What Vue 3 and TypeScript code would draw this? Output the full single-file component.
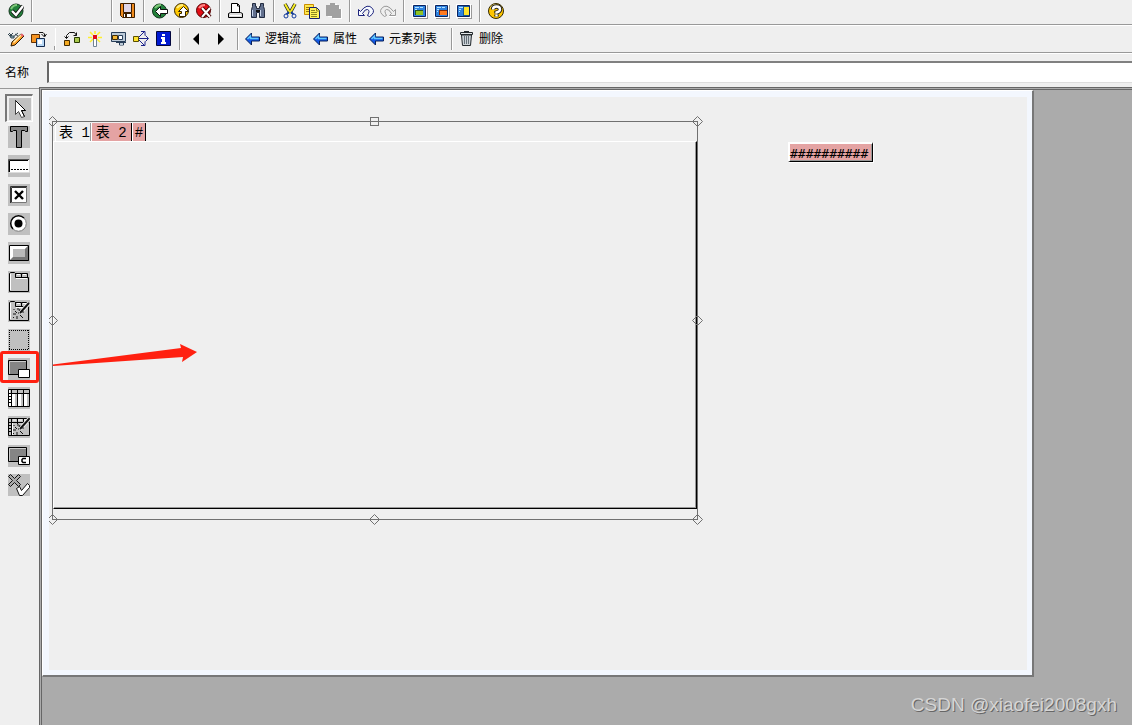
<script setup lang="ts">
import { ref } from 'vue'

interface Tool { id: string; label: string }

const fieldName = ref('')
const activeTool = ref('pointer')
const activeTab = ref('表 1')

const mainGroups: Tool[][] = [
  [{ id: 'save', label: '保存' }],
  [{ id: 'back', label: '返回' }, { id: 'exit', label: '退出' }, { id: 'cancel', label: '取消' }],
  [{ id: 'print', label: '打印' }, { id: 'find', label: '查找' }],
  [{ id: 'cut', label: '剪切' }, { id: 'copy', label: '复制' }, { id: 'paste', label: '粘贴' }],
  [{ id: 'undo', label: '撤销' }, { id: 'redo', label: '重做' }],
  [{ id: 'win-green', label: '窗口一' }, { id: 'win-orange', label: '窗口二' }, { id: 'win-yellow', label: '窗口三' }],
  [{ id: 'help', label: '帮助' }],
]
const editTools: Tool[] = [{ id: 'edit', label: '显示/修改' }, { id: 'other', label: '其它对象' }]
const objectTools: Tool[] = [
  { id: 'activate', label: '激活' },
  { id: 'wand', label: '检查' },
  { id: 'where', label: '使用位置' },
  { id: 'tree', label: '对象清单' },
  { id: 'info', label: '信息' },
]
const links = ['逻辑流', '属性', '元素列表']
const palette: Tool[] = [
  { id: 'pointer', label: '选择' },
  { id: 'text', label: '文本字段' },
  { id: 'entry', label: '输入字段' },
  { id: 'check', label: '复选框' },
  { id: 'radio', label: '单选按钮' },
  { id: 'push', label: '按钮' },
  { id: 'tabstrip', label: '标签条' },
  { id: 'tabwizard', label: '标签条向导' },
  { id: 'frame', label: '框' },
  { id: 'subscreen', label: '子屏幕区域' },
  { id: 'table', label: '表控制' },
  { id: 'tablewizard', label: '表控制向导' },
  { id: 'custom', label: '定制控制' },
  { id: 'status', label: '状态图标' },
]
const tabs = ['表 1', '表 2', '#']
const handles = ['nw', 'ne', 'w', 'e', 'sw', 's', 'se']
</script>

<template>
  <svg class="defs" aria-hidden="true">
    <defs>
      <symbol id="ok" viewBox="0 0 16 16">
        <circle cx="8" cy="8" r="7" fill="#23823b" stroke="#12351c" />
        <path d="M3 6Q5 2 9 2" stroke="#7dc878" stroke-width="2" fill="none" />
        <path d="M4 8l4 4 7-9" stroke="#111" stroke-width="4" fill="none" />
        <path d="M4 8l4 4 7-9" stroke="#fff" stroke-width="2.4" fill="none" />
      </symbol>
      <symbol id="save" viewBox="0 0 16 16">
        <path d="M.5 .5h14v14H2.500l-2-2z" fill="#f08b1d" stroke="#3a1c00" />
        <path d="M4 1h7v8H4z" fill="#ded5e8" /><path d="M3.500 1v8.500h8V1" fill="none" stroke="#3a1c00" />
        <path d="M4 11h7v3H4z" fill="#fff" /><path d="M3.500 14v-3.500h8V14" fill="none" stroke="#3a1c00" /><path d="M5 11h2v3H5z" fill="#3a1c00" />
      </symbol>
      <symbol id="back" viewBox="0 0 16 16">
        <circle cx="7.500" cy="8" r="7" fill="#23823b" stroke="#12351c" />
        <path d="M3 5Q5 2 9 2" stroke="#7dc878" stroke-width="2" fill="none" />
        <path d="M3.500 8.500l5-5v3h7v4h-7v3z" fill="#fff" stroke="#111" />
      </symbol>
      <symbol id="exit" viewBox="0 0 16 16">
        <circle cx="7.500" cy="7.500" r="7" fill="#ffc800" stroke="#332200" />
        <path d="M3 5Q5 2 9 2" stroke="#ffef80" stroke-width="2" fill="none" />
        <path d="M9.500 3.500l5 5h-3v5h-6v-3h2v-2h-3z" fill="#fff" stroke="#332200" />
      </symbol>
      <symbol id="cancel" viewBox="0 0 16 16">
        <circle cx="7.500" cy="7.500" r="7" fill="#e30d16" stroke="#500" />
        <path d="M3 5Q5 2 9 2" stroke="#ff8585" stroke-width="2" fill="none" />
        <path d="M6 5l8 9M14 5l-8 9" stroke="#400" stroke-width="4" />
        <path d="M6 5l8 9M14 5l-8 9" stroke="#fff" stroke-width="2" />
      </symbol>
      <symbol id="print" viewBox="0 0 16 16">
        <path d="M3.500 .5h6l2 2v7h-8z" fill="#fff" stroke="#000" />
        <path d="M.5 10.500l2-1h10l2 1v4H.5z" fill="#ddd" stroke="#000" />
        <path d="M2 12.500h11" stroke="#fff" /><path d="M9.500 1v2h2" fill="none" stroke="#000" />
      </symbol>
      <symbol id="find" viewBox="0 0 16 16">
        <path d="M2.500 .5h3v3h1v2h3v-2h1v-3h3v3l1 3v8h-5v-5h-3v5h-5v-8l1-3z" fill="#62708e" stroke="#222b40" />
        <path d="M2.500 7v6M10.500 7v6" stroke="#c8d6ed" /><path d="M6 8h4" stroke="#111" stroke-width="2" />
      </symbol>
      <symbol id="cut" viewBox="0 0 16 16">
        <path d="M3 1l5 9M13 1l-5 9" stroke="#222" stroke-width="3.500" />
        <path d="M3 1l5 9 5-9" stroke="#f7ed24" stroke-width="2" fill="none" />
        <path d="M7 9l-3 3M9 9l3 3" stroke="#123a99" stroke-width="2" />
        <circle cx="4" cy="13" r="2" fill="#eee" stroke="#123a99" /><circle cx="12" cy="13" r="2" fill="#eee" stroke="#123a99" />
      </symbol>
      <symbol id="copy" viewBox="0 0 16 16">
        <path d="M.5 1.500h9v10h-9z" fill="#ffe94d" stroke="#c98d00" />
        <path d="M2 4.500h3M2 6.500h3M2 8.500h3" stroke="#a07900" />
        <path d="M5.500 4.500h7l3 3v8h-10z" fill="#fff35b" stroke="#15206d" />
        <path d="M12.500 5v3h3M7 7.500h4M7 9.500h6M7 11.500h6M7 13.500h6" fill="none" stroke="#8b8620" />
      </symbol>
      <symbol id="paste" viewBox="0 0 16 16">
        <path d="M2 3h3V1h6v2h3v3h2v10H7v-2H2z" fill="#fff" />
        <path d="M0 2h4V0h5v2h4v4h2v9H6v-2H0z" fill="#a1a1a1" />
      </symbol>
      <symbol id="undo" viewBox="0 0 16 16">
        <path d="M.5 6.500v6h6l-2-2q3-5 5-4 3 1 0 6l2 1q6-4 3-8-5-6-12 3z" fill="#f6faff" stroke="#1d237c" />
      </symbol>
      <symbol id="redo" viewBox="0 0 16 16">
        <path d="M15.500 6.500v6h-6l2-2q-3-5-5-4-3 1 0 6l-2 1q-6-4-3-8 5-6 12 3z" fill="#eee" stroke="#999" />
        <path d="M9 13.500h7" fill="none" stroke="#fff" />
      </symbol>
      <symbol id="win" viewBox="0 0 16 16">
        <path d="M2 2h14v14H2z" fill="#999" /><path d="M0 1h15v14H0z" fill="#fff" />
        <path d="M1.500 2.500h12v11h-12z" fill="#2f83df" stroke="#0b235e" />
        <path d="M3 4.500h4M3 6.500h2M8 4.500h3M3 8.500h1" stroke="#b6e3ff" />
      </symbol>
      <symbol id="win-green" viewBox="0 0 16 16"><use href="#win" /><path d="M3 7h8v5H3z" fill="#2b5c1c" /><path d="M4 8h7v4H4z" fill="#90c423" /></symbol>
      <symbol id="win-orange" viewBox="0 0 16 16"><use href="#win" /><path d="M5 7h8v5H5z" fill="#8a2a00" /><path d="M6 8h7v4H6z" fill="#ff7b21" /></symbol>
      <symbol id="win-yellow" viewBox="0 0 16 16"><use href="#win" /><path d="M7 3h6v10H7z" fill="#145a99" /><path d="M8 4h5v8H8z" fill="#ffe52a" /></symbol>
      <symbol id="help" viewBox="0 0 16 16">
        <circle cx="8" cy="8" r="7.500" fill="#ffc600" stroke="#332900" />
        <path d="M3 5Q5 2 8 2" stroke="#fff099" stroke-width="2" fill="none" />
        <path d="M5 6.500q0-3 3.500-3t3.500 3q0 2-3.500 3v1m0 1v2" stroke="#222" stroke-width="4.400" fill="none" />
        <path d="M5 6.500q0-3 3.500-3t3.500 3q0 2-3.500 3v1m0 1v2" stroke="#fff" stroke-width="2.400" fill="none" />
      </symbol>

      <symbol id="edit" viewBox="0 0 16 16">
        <path d="M0 3l2 2 3-3M7 3l3 2M1 2l4 4 5-4" stroke="#344852" fill="none" />
        <path d="M2 5h4v2H3z" fill="#8fb4c4" stroke="#344852" />
        <path d="M13 3l3 2-9 9-4 1 1-4z" fill="#ffa129" stroke="#291800" />
        <path d="M5.500 11.500l8-8" stroke="#fff0b3" stroke-width="1.500" /><path d="M12.500 4l1.500-1.500L16 4.500 14.500 6z" fill="#ed6070" />
      </symbol>
      <symbol id="other" viewBox="0 0 16 16">
        <path d="M.5 3.500h8v8h-8z" fill="#f59423" stroke="#633000" />
        <path d="M5.500 7.500h8v8h-8z" fill="#b9d9f6" stroke="#142b50" /><path d="M7 9h4v4H7z" fill="#fff" />
        <path d="M8 1.500h4l1.500 1.500v2M10.500 3l3 3 2-3" fill="none" stroke="#111" />
      </symbol>
      <symbol id="activate" viewBox="0 0 16 16">
        <path d="M.5 9.500h5v5h-5z" fill="#f4aa22" stroke="#432a00" />
        <path d="M10.500 6.500h5v5h-5z" fill="#a8c84c" stroke="#283b00" />
        <path d="M2.500 7.500v-3l3-3h5l2 3M.5 5.500l2 2 2-2M9.500 4.500h3v-3" fill="none" stroke="#111" />
      </symbol>
      <symbol id="wand" viewBox="0 0 16 16">
        <path d="M3 1l3 3M13 1l-3 3M8 0v3M1 6.500h4M11 6.500h4M3 11l3-3M13 11l-3-3" stroke="#fff02c" stroke-width="1.500" />
        <path d="M6.500 7.500h3v8h-3z" fill="#fff" stroke="#708492" /><path d="M6 4h4v4H6z" fill="#e00d18" />
      </symbol>
      <symbol id="where" viewBox="0 0 16 16">
        <path d="M1.500 1.500h14v9h-14z" fill="#bdcbd8" stroke="#283e58" />
        <path d="M2.500 4.500h5v4h-5z" fill="#f5b938" stroke="#442d00" /><path d="M8.500 4.500h4v4h-4z" fill="#fff" stroke="#283e58" />
        <path d="M6 11.500h10M9.500 11v3h4v-3" stroke="#283e58" fill="none" /><path d="M10 12h3v2h-3z" fill="#bdcbd8" />
      </symbol>
      <symbol id="tree" viewBox="0 0 16 16">
        <path d="M5 7.500h10M6 6l5-5M6 9l5 5M8 .5h4v4M8 14.500h4v-4M12.500 4.500l3 3-3 3" fill="none" stroke="#1d248c" />
        <path d="M.5 5.500h5v5h-5z" fill="#ffe32d" stroke="#5b5000" />
      </symbol>
      <symbol id="info" viewBox="0 0 16 16">
        <path d="M.5 .5h14v14H.5z" fill="#0019d1" stroke="#02063d" />
        <path d="M6 3h3v2H6zM5 6h4v5h1v2H5v-2h1V8H5z" fill="#fff" />
      </symbol>
      <symbol id="prev" viewBox="0 0 16 16"><path d="M4 8l6-6v12z" /></symbol>
      <symbol id="next" viewBox="0 0 16 16"><path d="M11 8L5 2v12z" /></symbol>
      <symbol id="arrow" viewBox="0 0 16 16">
        <path d="M.5 8l6-6v4h8v4h-8v4z" fill="#1258e5" stroke="#07205b" />
        <path d="M2.500 8l3-3v2.500h8" fill="none" stroke="#61caff" stroke-width="1.500" />
      </symbol>
      <symbol id="trash" viewBox="0 0 16 16">
        <path d="M2.500 4h10l-1 10.500h-8z" fill="#cbd1d6" stroke="#22282c" />
        <path d="M1.500 1.500h12v2h-12z" fill="#e3e7e9" stroke="#22282c" /><path d="M5 .5h5" stroke="#22282c" />
        <path d="M5.500 5v8M7.500 5v8M9.500 5v8" stroke="#657078" />
      </symbol>

      <symbol id="pointer" viewBox="0 0 22 22">
        <path d="M6.500 2.500v14l3-3 3 6 3-1-3-6h4z" fill="#fff" stroke="#444" /><path d="M6.500 2.500l10 10h-4l3 6" fill="none" stroke="#000" />
      </symbol>
      <symbol id="text" viewBox="0 0 22 22"><path d="M2.500 .5h17v5h-2l-1-1h-3v17h-5v-17h-3l-1 1h-2z" fill="#858585" stroke="#000" /></symbol>
      <symbol id="entry" viewBox="0 0 22 22">
        <path d="M1 5h20v12H1z" fill="#fff" /><path d="M.5 17V4.500H21" fill="none" stroke="#555" /><path d="M1.500 17V5.500H20" fill="none" stroke="#000" />
        <path d="M3 14.500h17" stroke="#000" stroke-dasharray="2 1" /><path d="M1 17.500h20.500V5" fill="none" stroke="#ddd" />
      </symbol>
      <symbol id="check" viewBox="0 0 22 22">
        <path d="M3 3h16v16H3z" fill="#fff" /><path d="M2.500 19V2.500H19M3.500 18V3.500H18" fill="none" stroke="#333" />
        <path d="M18.500 3v15.500H3" fill="none" stroke="#777" /><path d="M7 7l8 8M15 7l-8 8" stroke="#000" stroke-width="2.400" />
      </symbol>
      <symbol id="radio" viewBox="0 0 22 22">
        <circle cx="10.500" cy="10.500" r="7.500" fill="#fff" stroke="#fff" />
        <path d="M5 16A7.500 7.500 0 1 1 16 5" fill="none" stroke="#000" stroke-width="1.500" />
        <path d="M16 5A7.500 7.500 0 0 1 5 16" fill="none" stroke="#777" /><circle cx="10.500" cy="10.500" r="4" fill="#000" />
      </symbol>
      <symbol id="push" viewBox="0 0 22 22">
        <path d="M1 3h20v16H1z" fill="#bababa" /><path d="M1 3h20l-4 4H5v9l-4 3z" fill="#fff" /><path d="M21 3v16H1l4-4h12V7z" fill="#777" />
        <path d="M1.500 3.500h19v15h-19z" fill="none" stroke="#000" />
      </symbol>
      <symbol id="tabstrip" viewBox="0 0 22 22">
        <path d="M1.500 20.500V2.500l1-1h4l1 1v4h13v14z" fill="#c0c0c0" stroke="#000" />
        <path d="M7.500 6V2.500h6V6M13.500 2.500h6V7" fill="none" stroke="#000" /><path d="M2.500 19V3M8 7.500h11M9 3.500h3M15 3.500h3" fill="none" stroke="#fff" />
      </symbol>
      <symbol id="magic" viewBox="0 0 22 22">
        <path d="M12 13l9-10" stroke="#eee" stroke-width="4" /><path d="M12 13l9-10" stroke="#111" stroke-width="2" />
        <path d="M6 9v1M10 8v2M14 12h2M5 14h3M12 15l3 3M9 16v3M6 17l-1 1M7 11l2 2M11 11l1-2M10 13h1" stroke="#111" />
      </symbol>
      <symbol id="tabwizard" viewBox="0 0 22 22"><use href="#tabstrip" /><use href="#magic" /></symbol>
      <symbol id="frame" viewBox="0 0 22 22"><path d="M1 1.500h20M1 20.500h20M1.500 1v20M20.500 1v20" fill="none" stroke="#000" stroke-dasharray="1 1" /></symbol>
      <symbol id="subscreen" viewBox="0 0 22 22">
        <path d="M.5 2.500h18v14H.5z" fill="#858585" stroke="#000" /><path d="M1.500 16V3.500H18" fill="none" stroke="#ccc" />
        <path d="M10.500 11.500h11v8h-11z" fill="#fff" stroke="#000" />
      </symbol>
      <symbol id="table" viewBox="0 0 22 22">
        <path d="M1 2h20v18H1z" fill="#fff" /><path d="M2 3h19v3H2zM7 7h2v12H7M13 7h2v12h-2M19 7h2v12h-2" fill="#c0c0c0" />
        <path d="M.5 2.500h21v17H.5zM1 6.500h20M3.500 3v16M9.500 3v16M15.500 3v16" fill="none" stroke="#000" />
        <path d="M1 9.500h2M1 12.500h2M1 15.500h2" stroke="#000" />
      </symbol>
      <symbol id="tablewizard" viewBox="0 0 22 22">
        <path d="M1 2h20v18H1z" fill="#c0c0c0" /><path d="M.5 2.500h21v17H.5zM1 6.500h20M3.500 3v16M9.500 3v5M15.500 3v5M1 9.500h3M1 12.500h3M1 15.500h3" fill="none" stroke="#000" />
        <path d="M4.500 7v12M10 4h4M5 4h3M16 4h4" stroke="#fff" /><use href="#magic" />
      </symbol>
      <symbol id="custom" viewBox="0 0 22 22"><use href="#subscreen" /><path d="M18 13.500h-3l-1 1v2l1 1h3" fill="none" stroke="#000" stroke-width="1.500" /></symbol>
      <symbol id="status" viewBox="0 0 22 22">
        <path d="M2.500 .5l4 4 4-4 2 2-4 4 4 4-2 2-4-4-4 4-2-2 4-4-4-4z" fill="#aaa" stroke="#111" />
        <path d="M8.500 14.500l3-2 2 4 6-7 2 2v2l-7 8h-3z" fill="#fff" stroke="#111" />
      </symbol>
    </defs>
  </svg>

  <div class="painter">
    <header>
      <div class="bar bar-main" role="toolbar" aria-label="标准">
        <button class="tool" aria-label="确认"><svg class="icon"><use href="#ok" /></svg></button>
        <span class="sep"></span>
        <span class="command"></span>
        <template v-for="(group, i) in mainGroups" :key="i">
          <span class="sep"></span>
          <button v-for="t in group" :key="t.id" class="tool" :aria-label="t.label">
            <svg class="icon"><use :href="'#' + t.id" /></svg>
          </button>
        </template>
      </div>

      <div class="bar bar-app" role="toolbar" aria-label="应用">
        <button v-for="t in editTools" :key="t.id" class="tool" :aria-label="t.label">
          <svg class="icon"><use :href="'#' + t.id" /></svg>
        </button>
        <span class="sep short"></span>
        <button v-for="t in objectTools" :key="t.id" class="tool" :aria-label="t.label">
          <svg class="icon"><use :href="'#' + t.id" /></svg>
        </button>
        <span class="sep"></span>
        <button class="tool nav" aria-label="上一个"><svg class="icon"><use href="#prev" /></svg></button>
        <button class="tool nav" aria-label="下一个"><svg class="icon"><use href="#next" /></svg></button>
        <span class="sep"></span>
        <button v-for="l in links" :key="l" class="link"><svg class="icon"><use href="#arrow" /></svg>{{ l }}</button>
        <span class="sep"></span>
        <button class="link"><svg class="icon"><use href="#trash" /></svg>删除</button>
      </div>

      <div class="name-row">
        <label for="field-name">名称</label>
        <input id="field-name" v-model="fieldName" type="text" />
      </div>
    </header>

    <main>
      <nav class="palette" aria-label="元素">
        <button
          v-for="t in palette"
          :key="t.id"
          class="element"
          :class="{ active: activeTool === t.id, marked: t.id === 'subscreen' }"
          :aria-label="t.label"
          @click="activeTool = t.id"
        >
          <svg class="glyph"><use :href="'#' + t.id" /></svg>
        </button>
      </nav>

      <section class="workspace">
        <div class="screen">
          <div class="surface">
            <div class="selection">
              <div class="tabs" role="tablist">
                <button
                  v-for="t in tabs"
                  :key="t"
                  class="tab"
                  :class="{ current: activeTab === t, overflow: t === '#' }"
                  role="tab"
                  :aria-selected="activeTab === t"
                  @click="activeTab = t"
                >{{ t }}</button>
              </div>
              <div class="tab-page" role="tabpanel"></div>
              <svg v-for="h in handles" :key="h" class="handle" :class="h" viewBox="0 0 11 11">
                <path d="M5.500 .5l5 5-5 5-5-5z" />
              </svg>
              <span class="handle-box"></span>
            </div>
            <button class="placeholder">##########</button>
            <svg class="pointer-arrow" viewBox="0 0 145 18">
              <path d="M0 20.500L128 4 127 0l17 8-15 10 1-5L0 22z" />
            </svg>
          </div>
        </div>
        <p class="credit">CSDN @xiaofei2008gxh</p>
      </section>
    </main>
  </div>
</template>

<style>
body {
  margin: 0;
  background: #efefef;
}
</style>

<style scoped>
.defs {
  position: absolute;
  width: 0;
  height: 0;
}
.painter {
  display: flex;
  flex-direction: column;
  min-height: 100vh;
  background: #efefef;
  color: #000;
  font: 12px/16px "Liberation Sans", "Noto Sans CJK SC", sans-serif;
}
button {
  margin: 0;
  padding: 0;
  border: 0;
  background: transparent;
  color: inherit;
  font: inherit;
}
.bar {
  display: flex;
  align-items: center;
  box-sizing: border-box;
  border-bottom: 1px solid #999;
  box-shadow: 0 1px #fff;
  margin-bottom: 1px;
}
.bar-main {
  height: 25px;
  padding: 0 0 2px 5px;
}
.bar-app {
  height: 27px;
  padding-left: 4px;
}
.tool {
  display: flex;
  flex: none;
  align-items: center;
  justify-content: center;
  width: 22px;
  height: 22px;
}
.bar-app .tool {
  width: 23px;
}
.bar-app .nav {
  width: 24px;
}
.icon {
  flex: none;
  width: 16px;
  height: 16px;
}
.sep {
  flex: none;
  width: 1px;
  height: 22px;
  margin: 0 4px;
  background: #999;
  border-right: 1px solid #fff;
}
.sep.short {
  background: linear-gradient(to top, #999 4px, transparent 4px);
}
.command {
  width: 70px;
}
.link {
  display: flex;
  flex: none;
  align-items: center;
  gap: 4px;
  padding: 0 10px 0 2px;
  white-space: nowrap;
}
.name-row {
  display: flex;
  align-items: center;
  gap: 18px;
  padding: 7px 0 4px 5px;
}
.name-row label {
  flex: none;
  padding-top: 2px;
}
.name-row input {
  flex: 1;
  min-width: 0;
  box-sizing: border-box;
  height: 22px;
  padding: 0 4px;
  border: solid;
  border-width: 2px 0 1px 2px;
  border-color: #808080 #ddd #ddd #666;
  border-radius: 0;
  background: #fff;
  font: inherit;
  outline: 0;
}
main {
  display: flex;
  flex: 1;
}
.palette {
  display: flex;
  flex: none;
  flex-direction: column;
  gap: 1px;
  box-sizing: border-box;
  width: 39px;
  margin-top: 1px;
  padding: 5px 6px 0 5px;
  border-top: 1px solid #999;
}
.element {
  position: relative;
  display: flex;
  align-items: center;
  justify-content: center;
  box-sizing: border-box;
  width: 28px;
  height: 28px;
}
.element.active {
  border: solid;
  border-width: 2px 1px 1px 2px;
  border-color: #777 #fff #fff #777;
}
.element.marked::after {
  content: "";
  position: absolute;
  inset: -4px -6px 0 -5px;
  border: 3px solid #ff2010;
  border-radius: 3px;
}
.glyph {
  flex: none;
  width: 22px;
  height: 22px;
  background: #c0c0c0;
}
.workspace {
  position: relative;
  display: flex;
  flex: 1;
  min-width: 0;
  box-sizing: border-box;
  padding: 0 98px 48px 0;
  border: 3px double #666;
  border-right: 0;
  border-bottom: 0;
  background: #ababab;
}
.screen {
  display: flex;
  flex: 1;
  box-sizing: border-box;
  padding: 6px 5px 5px 6px;
  border: solid;
  border-width: 1px 2px 2px 1px;
  border-color: #fff #777 #777 #fff;
  background: #f3f7fe;
}
.surface {
  position: relative;
  flex: 1;
  overflow: hidden;
  background: #efefef;
}
.selection {
  position: absolute;
  left: 3px;
  top: 24px;
  display: flex;
  flex-direction: column;
  box-sizing: border-box;
  width: 646px;
  height: 399px;
  padding: 1px 0 10px;
  border: 1px solid #707070;
}
.tabs {
  display: flex;
  flex: none;
  height: 18px;
  padding-left: 2px;
}
.tab {
  box-sizing: border-box;
  height: 18px;
  padding: 0 4px;
  border-left: 1px solid #fff;
  border-right: 1px solid #000;
  background: #e4a3a3;
  font: 14px/20px "Liberation Mono", "Noto Sans CJK SC", monospace;
  white-space: pre;
}
.tab.current {
  padding: 0 0 0 3px;
  border-right-color: #999;
  background: #efefef;
}
.tab.overflow {
  padding: 0 2px;
}
.tab-page {
  flex: 1;
  border: solid;
  border-width: 1px;
  border-color: #fff #000 #000 #fff;
  box-shadow: inset -1px -1px #999;
}
.handle {
  position: absolute;
  width: 11px;
  height: 11px;
  fill: none;
  stroke: #707070;
}
.nw, .w, .sw { left: -6px; }
.ne, .e, .se { right: -6px; }
.nw, .ne { top: -6px; }
.w, .e { top: 193px; }
.sw, .s, .se { bottom: -6px; }
.s { left: 316px; }
.handle-box {
  position: absolute;
  left: 317px;
  top: -5px;
  box-sizing: border-box;
  width: 9px;
  height: 9px;
  border: 1px solid #707070;
}
.placeholder {
  position: absolute;
  left: 739px;
  top: 45px;
  box-sizing: border-box;
  width: 85px;
  height: 20px;
  border: solid;
  border-width: 2px 1px 1px 2px;
  border-color: #fff #000 #000 #fff;
  box-shadow: 1px 1px #fff, inset -1px -1px #999;
  background: #e4a3a3;
  font: 13px/19px "DejaVu Sans Mono", monospace;
  text-align: left;
}
.pointer-arrow {
  position: absolute;
  left: 4px;
  top: 247px;
  width: 145px;
  height: 18px;
  overflow: visible;
  fill: #ff2010;
}
.credit {
  position: absolute;
  right: 15px;
  bottom: 8px;
  margin: 0;
  color: #d5d5d5;
  font: 19px/24px "Liberation Sans", sans-serif;
  text-shadow: 1px 1px #666;
}
</style>
